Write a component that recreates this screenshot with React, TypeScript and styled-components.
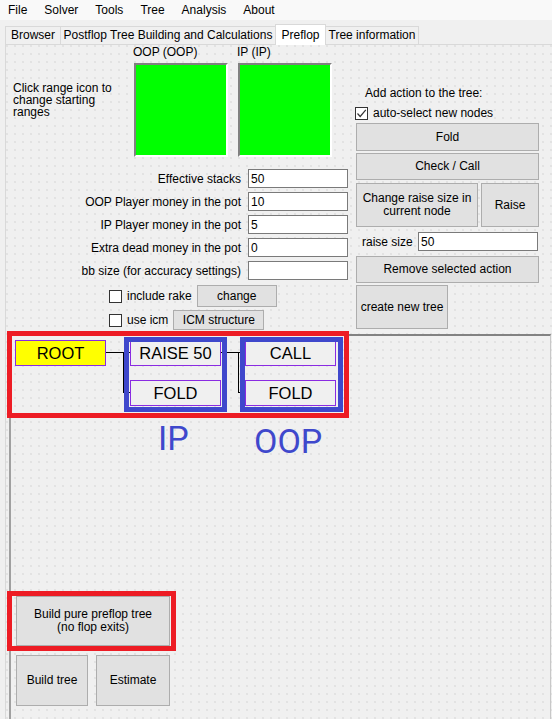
import styled, { createGlobalStyle } from 'styled-components';

const GlobalStyle = createGlobalStyle`
  html, body {
    margin: 0;
    padding: 0;
    background: #f0f0f0;
  }
  body {
    font-family: "Liberation Sans", Arial, sans-serif;
    font-size: 12px;
    color: #000;
  }
`;

const DOTS = `
  background-color: #f0f0f0;
  background-image: radial-gradient(circle at 1px 1px, #e2e2e2 0.7px, transparent 1px);
  background-size: 8px 8px;
`;

const menuItems = ['File', 'Solver', 'Tools', 'Tree', 'Analysis', 'About'];

const tabs = [
  { label: 'Browser', width: 56 },
  { label: 'Postflop Tree Building and Calculations', width: 216 },
  { label: 'Preflop', width: 51, active: true },
  { label: 'Tree information', width: 94 },
];

const formRows = [
  { label: 'Effective stacks', value: '50' },
  { label: 'OOP Player money in the pot', value: '10' },
  { label: 'IP Player money in the pot', value: '5' },
  { label: 'Extra dead money in the pot', value: '0' },
  { label: 'bb size (for accuracy settings)', value: '' },
];

const App = () => {
  return (
    <Window>
      <GlobalStyle />
      <MenuBar>
        {menuItems.map((item) => (
          <MenuItem key={item}>{item}</MenuItem>
        ))}
      </MenuBar>
      <TabStrip>
        {tabs.map((tab) => (
          <Tab key={tab.label} $width={tab.width} $active={!!tab.active}>
            {tab.label}
          </Tab>
        ))}
      </TabStrip>
      <Panel>
        <TopSection>
          <LeftCol>
            <RangeRow>
              <Instructions>Click range icon to change starting ranges</Instructions>
              <RangeGroup>
                <RangeLabel>OOP (OOP)</RangeLabel>
                <RangeSquare />
              </RangeGroup>
              <RangeGroup>
                <RangeLabel>IP (IP)</RangeLabel>
                <RangeSquare />
              </RangeGroup>
            </RangeRow>
            <FormGrid>
              {formRows.map((row) => (
                <FormRowFragment key={row.label} label={row.label} value={row.value} />
              ))}
            </FormGrid>
            <CheckGroup>
              <CheckRow $height={22}>
                <Checkbox />
                <CheckLabel>include rake</CheckLabel>
                <Button $width={80} $height={22}>change</Button>
              </CheckRow>
              <CheckRow $height={20}>
                <Checkbox />
                <CheckLabel>use icm</CheckLabel>
                <Button $width={91} $height={20}>ICM structure</Button>
              </CheckRow>
            </CheckGroup>
          </LeftCol>
          <RightCol>
            <ActionTitle>Add action to the tree:</ActionTitle>
            <AutoRow>
              <Checkbox>
                <svg width="11" height="11" viewBox="0 0 11 11">
                  <polyline points="1.5,5.5 4.2,8.5 9.8,1.8" fill="none" stroke="#333" strokeWidth="1.2" />
                </svg>
              </Checkbox>
              <CheckLabel>auto-select new nodes</CheckLabel>
            </AutoRow>
            <Button $width={183} $height={28} $top={3}>Fold</Button>
            <Button $width={183} $height={27} $top={2}>Check / Call</Button>
            <RaiseRow>
              <Button $width={122} $height={44}>
                Change raise size in
                <br />
                current node
              </Button>
              <Button $width={58} $height={44}>Raise</Button>
            </RaiseRow>
            <RaiseSizeRow>
              <RaiseSizeLabel>raise size</RaiseSizeLabel>
              <TextBox $width={120} defaultValue="50" />
            </RaiseSizeRow>
            <Button $width={183} $height={27} $top={5}>Remove selected action</Button>
            <Button $width={92} $height={44} $top={2}>create new tree</Button>
          </RightCol>
        </TopSection>
        <TreeArea>
          <TreeCanvas>
            <Wire $x={95} $y={16} $w={24} $h={1} />
            <Wire $x={112} $y={16} $w={1} $h={41} />
            <Wire $x={112} $y={56} $w={7} $h={1} />
            <Wire $x={210} $y={16} $w={24} $h={1} />
            <Wire $x={227} $y={16} $w={1} $h={41} />
            <Wire $x={227} $y={56} $w={7} $h={1} />
            <Node $x={4} $y={4} $bg="#ffff00">ROOT</Node>
            <Node $x={119} $y={4}>RAISE 50</Node>
            <Node $x={119} $y={44}>FOLD</Node>
            <Node $x={234} $y={4}>CALL</Node>
            <Node $x={234} $y={44}>FOLD</Node>
          </TreeCanvas>
          <BottomButtons>
            <Button $width={154} $height={50}>
              Build pure preflop tree
              <br />
              (no flop exits)
            </Button>
            <BottomRow>
              <Button $width={72} $height={51}>Build tree</Button>
              <Button $width={74} $height={51}>Estimate</Button>
            </BottomRow>
          </BottomButtons>
        </TreeArea>
      </Panel>

      <Highlight $x={7} $y={331} $w={342} $h={87} $color="#ed1c24" />
      <Highlight $x={124} $y={337} $w={103} $h={75} $color="#3f48cc" />
      <Highlight $x={240} $y={337} $w={103} $h={75} $color="#3f48cc" />
      <Highlight $x={7} $y={591} $w={169} $h={60} $color="#ed1c24" />
      <PlayerTag $x={158} $y={421}>IP</PlayerTag>
      <PlayerTag $x={254} $y={424}>OOP</PlayerTag>
    </Window>
  );
};

const FormRowFragment = ({ label, value }: { label: string; value: string }) => (
  <>
    <FormLabel>{label}</FormLabel>
    <TextBox $width={100} defaultValue={value} />
  </>
);

const Window = styled.div`
  position: relative;
  width: 552px;
  height: 719px;
  overflow: hidden;
  display: flex;
  flex-direction: column;
  background: #f0f0f0;
`;

const MenuBar = styled.div`
  height: 20px;
  flex: none;
  display: flex;
  align-items: center;
  background: #f9f9f9;
`;

const MenuItem = styled.span`
  padding: 0 8.5px;
  line-height: 20px;
  &:first-child {
    padding-left: 8px;
  }
`;

const TabStrip = styled.div`
  height: 24px;
  flex: none;
  display: flex;
  align-items: flex-end;
  padding-left: 5px;
`;

const Tab = styled.div<{ $width: number; $active: boolean }>`
  box-sizing: border-box;
  width: ${({ $width }) => $width}px;
  height: ${({ $active }) => ($active ? 21 : 18)}px;
  margin-left: -1px;
  margin-bottom: ${({ $active }) => ($active ? -1 : 0)}px;
  padding-top: ${({ $active }) => ($active ? 3 : 1)}px;
  border: 1px solid #d9d9d9;
  border-bottom: none;
  background: ${({ $active }) => ($active ? '#ffffff' : '#f0f0f0')};
  position: relative;
  z-index: ${({ $active }) => ($active ? 1 : 0)};
  text-align: center;
  white-space: nowrap;
  line-height: 14px;
  &:first-child {
    margin-left: 0;
  }
`;

const Panel = styled.div`
  flex: 1;
  margin-left: 5px;
  display: flex;
  flex-direction: column;
  border-top: 1px solid #d9d9d9;
  border-left: 1px solid #d9d9d9;
  ${DOTS}
`;

const TopSection = styled.div`
  height: 289px;
  flex: none;
  display: flex;
`;

const LeftCol = styled.div`
  width: 345px;
  display: flex;
  flex-direction: column;
`;

const RangeRow = styled.div`
  height: 124px;
  display: flex;
`;

const Instructions = styled.div`
  width: 112px;
  margin-left: 7px;
  margin-top: 37px;
  line-height: 12px;
`;

const RangeGroup = styled.div`
  display: flex;
  flex-direction: column;
  margin-left: 9px;
  & + & {
    margin-left: 10px;
  }
`;

const RangeLabel = styled.div`
  height: 18px;
  padding-top: 1px;
  box-sizing: border-box;
  margin-left: -1px;
  line-height: 12px;
`;

const RangeSquare = styled.div`
  box-sizing: border-box;
  width: 94px;
  height: 94px;
  background: #00ff00;
  border-top: 2px solid #808080;
  border-left: 2px solid #808080;
  border-right: 2px solid #ffffff;
  border-bottom: 2px solid #ffffff;
`;

const FormGrid = styled.div`
  display: grid;
  grid-template-columns: 1fr 100px;
  grid-auto-rows: 19px;
  column-gap: 7px;
  row-gap: 4px;
  align-items: center;
  padding-right: 3px;
`;

const FormLabel = styled.span`
  text-align: right;
  white-space: nowrap;
`;

const TextBox = styled.input<{ $width: number }>`
  box-sizing: border-box;
  width: ${({ $width }) => $width}px;
  height: 19px;
  margin: 0;
  padding: 0 2px;
  border: 1px solid #7a7a7a;
  background: #ffffff;
  font-family: "Liberation Sans", Arial, sans-serif;
  font-size: 12px;
  color: #000;
  outline: none;
`;

const CheckGroup = styled.div`
  margin-top: 5px;
  padding-left: 103px;
  display: flex;
  flex-direction: column;
  gap: 3px;
`;

const CheckRow = styled.div<{ $height: number }>`
  height: ${({ $height }) => $height}px;
  display: flex;
  align-items: center;
`;

const Checkbox = styled.span`
  box-sizing: border-box;
  width: 13px;
  height: 13px;
  flex: none;
  border: 1px solid #333333;
  background: #ffffff;
  display: flex;
  align-items: center;
  justify-content: center;
`;

const CheckLabel = styled.span`
  margin-left: 5px;
  margin-right: 5px;
  white-space: nowrap;
`;

const Button = styled.div<{ $width: number; $height: number; $top?: number }>`
  box-sizing: border-box;
  width: ${({ $width }) => $width}px;
  height: ${({ $height }) => $height}px;
  flex: none;
  margin-top: ${({ $top }) => $top ?? 0}px;
  background: #e1e1e1;
  border: 1px solid #adadad;
  display: flex;
  align-items: center;
  justify-content: center;
  text-align: center;
  line-height: 13px;
  white-space: nowrap;
`;

const RightCol = styled.div`
  flex: 1;
  display: flex;
  flex-direction: column;
  padding-top: 41px;
  padding-left: 5px;
`;

const ActionTitle = styled.div`
  margin-left: 9px;
  line-height: 14px;
`;

const AutoRow = styled.div`
  margin-top: 6px;
  margin-left: -1px;
  height: 14px;
  display: flex;
  align-items: center;
`;

const RaiseRow = styled.div`
  margin-top: 3px;
  display: flex;
  gap: 3px;
`;

const RaiseSizeRow = styled.div`
  margin-top: 5px;
  height: 19px;
  display: flex;
  align-items: center;
`;

const RaiseSizeLabel = styled.span`
  width: 56px;
  padding-left: 6px;
`;

const TreeArea = styled.div`
  flex: 1;
  width: 542px;
  margin-left: 3px;
  box-sizing: border-box;
  display: flex;
  flex-direction: column;
  border-top: 2px solid #828282;
  border-left: 2px solid #a0a0a0;
  border-right: 1px solid #c8c8c8;
`;

const TreeCanvas = styled.div`
  position: relative;
  height: 100px;
  flex: none;
`;

const Node = styled.div<{ $x: number; $y: number; $bg?: string }>`
  position: absolute;
  left: ${({ $x }) => $x}px;
  top: ${({ $y }) => $y}px;
  box-sizing: border-box;
  width: 91px;
  height: 26px;
  border: 1px solid #8a2be2;
  background: ${({ $bg }) => $bg ?? '#f0f0f0'};
  display: flex;
  align-items: center;
  justify-content: center;
  font-family: "Liberation Sans", Arial, sans-serif;
  font-size: 16.5px;
`;

const Wire = styled.div<{ $x: number; $y: number; $w: number; $h: number }>`
  position: absolute;
  left: ${({ $x }) => $x}px;
  top: ${({ $y }) => $y}px;
  width: ${({ $w }) => $w}px;
  height: ${({ $h }) => $h}px;
  background: #000;
`;

const BottomButtons = styled.div`
  margin-top: auto;
  padding: 0 0 13px 5px;
  display: flex;
  flex-direction: column;
  gap: 9px;
`;

const BottomRow = styled.div`
  display: flex;
  gap: 8px;
`;

const Highlight = styled.div<{ $x: number; $y: number; $w: number; $h: number; $color: string }>`
  position: absolute;
  left: ${({ $x }) => $x}px;
  top: ${({ $y }) => $y}px;
  width: ${({ $w }) => $w}px;
  height: ${({ $h }) => $h}px;
  box-sizing: border-box;
  border: 5px solid ${({ $color }) => $color};
  pointer-events: none;
`;

const PlayerTag = styled.div<{ $x: number; $y: number }>`
  position: absolute;
  left: ${({ $x }) => $x}px;
  top: ${({ $y }) => $y}px;
  font-family: Roboto, "Liberation Sans", sans-serif;
  font-size: 34px;
  line-height: 34px;
  color: #3f48cc;
`;

export default App;
